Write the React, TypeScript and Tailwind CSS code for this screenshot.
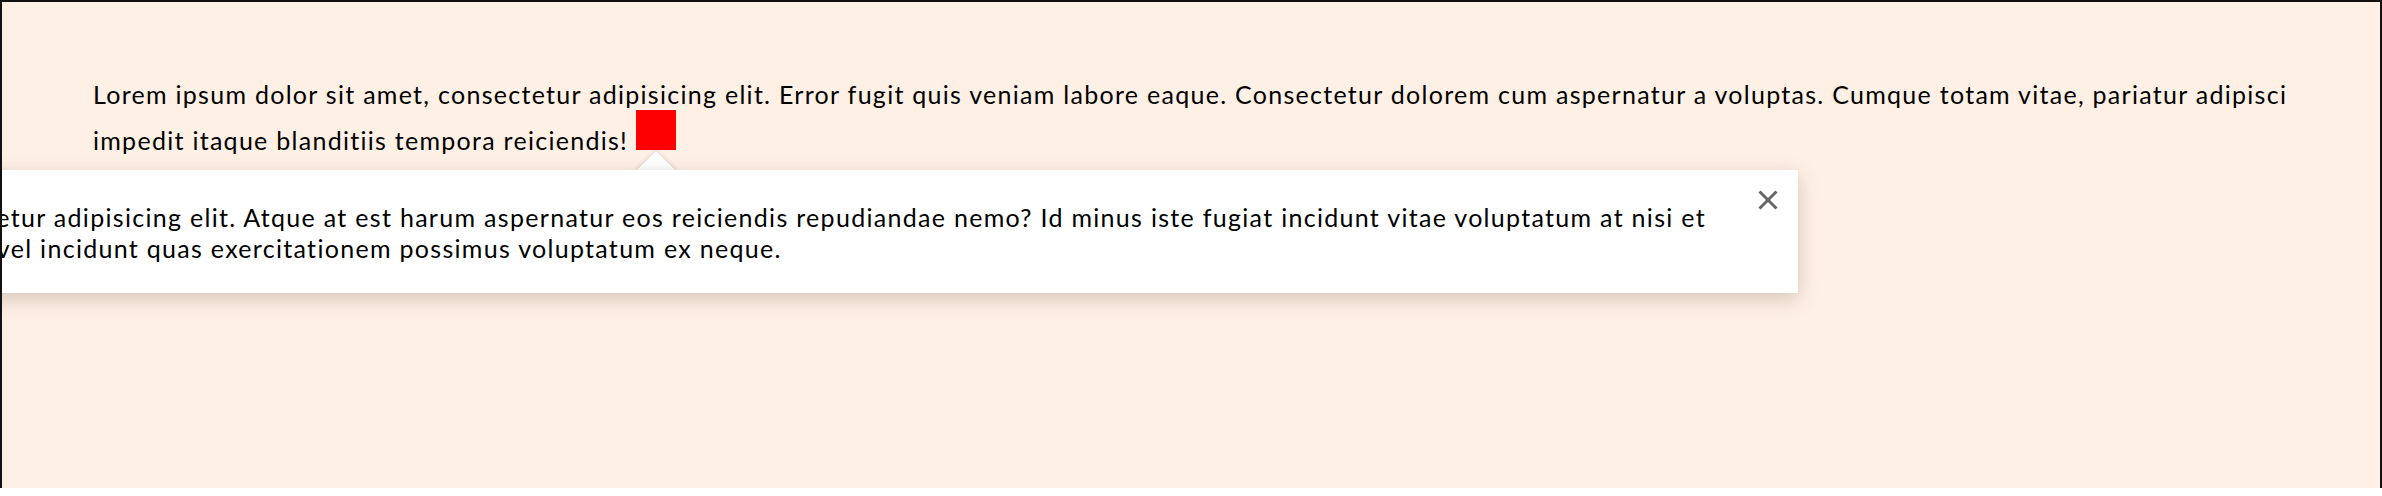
import React from 'react';

const FONT = "font-['Lato','Liberation_Sans',sans-serif]";

const CloseIcon: React.FC = () => (
  <svg width="20" height="20" viewBox="0 0 20 20" fill="none">
    <path d="M1.5 1.5 L18.5 18.5 M18.5 1.5 L1.5 18.5" stroke="#666" strokeWidth="3" />
  </svg>
);

const App: React.FC = () => {
  return (
    <div className={`w-[2382px] h-[496px] bg-white ${FONT}`}>
      <div className="h-[488px] bg-[#111] pt-[2px] px-[2px] flex">
        <div className="relative flex-1 bg-[#fff0e6] overflow-hidden">
          {/* Paragraph with trigger */}
          <p className="pt-[77px] pl-[91px] w-[2308px] text-[25px] leading-[31px] tracking-[1.28px] text-black">
            Lorem ipsum dolor sit amet, consectetur adipisicing elit. Error fugit quis veniam labore eaque.
            Consectetur dolorem cum aspernatur a voluptas. Cumque totam vitae, pariatur adipisci impedit itaque
            blanditiis tempora reiciendis!{' '}
            <span className="inline-block w-[40px] h-[40px] bg-[#ff0000] align-baseline" />
          </p>

          {/* Arrow */}
          <svg
            className="absolute left-[630px] top-[146px] drop-shadow-[0_0_2px_rgba(0,0,0,0.18)]"
            width="48"
            height="26"
            viewBox="0 0 48 26"
          >
            <polygon points="3,24 24,3 45,24" fill="#fff" />
          </svg>

          {/* Popover */}
          <div className="absolute left-[-492px] top-[168px] w-[2288px] h-[123px] bg-white shadow-[0_6px_20px_rgba(70,40,20,0.22)]">
            <p className="pl-[47px] pr-[68px] pt-[32px] text-[25px] leading-[31px] tracking-[1.3px] text-black">
              Lorem ipsum dolor sit amet, consectetur adipisicing elit. Atque at est harum aspernatur eos reiciendis
              repudiandae nemo? Id minus iste fugiat incidunt vitae voluptatum at nisi et consequatur officiis
              doloremque ut, vel incidunt quas exercitationem possimus voluptatum ex neque.
            </p>
            <button className="absolute right-[20px] top-[20px] p-0">
              <CloseIcon />
            </button>
          </div>
        </div>
      </div>
    </div>
  );
};

export default App;
